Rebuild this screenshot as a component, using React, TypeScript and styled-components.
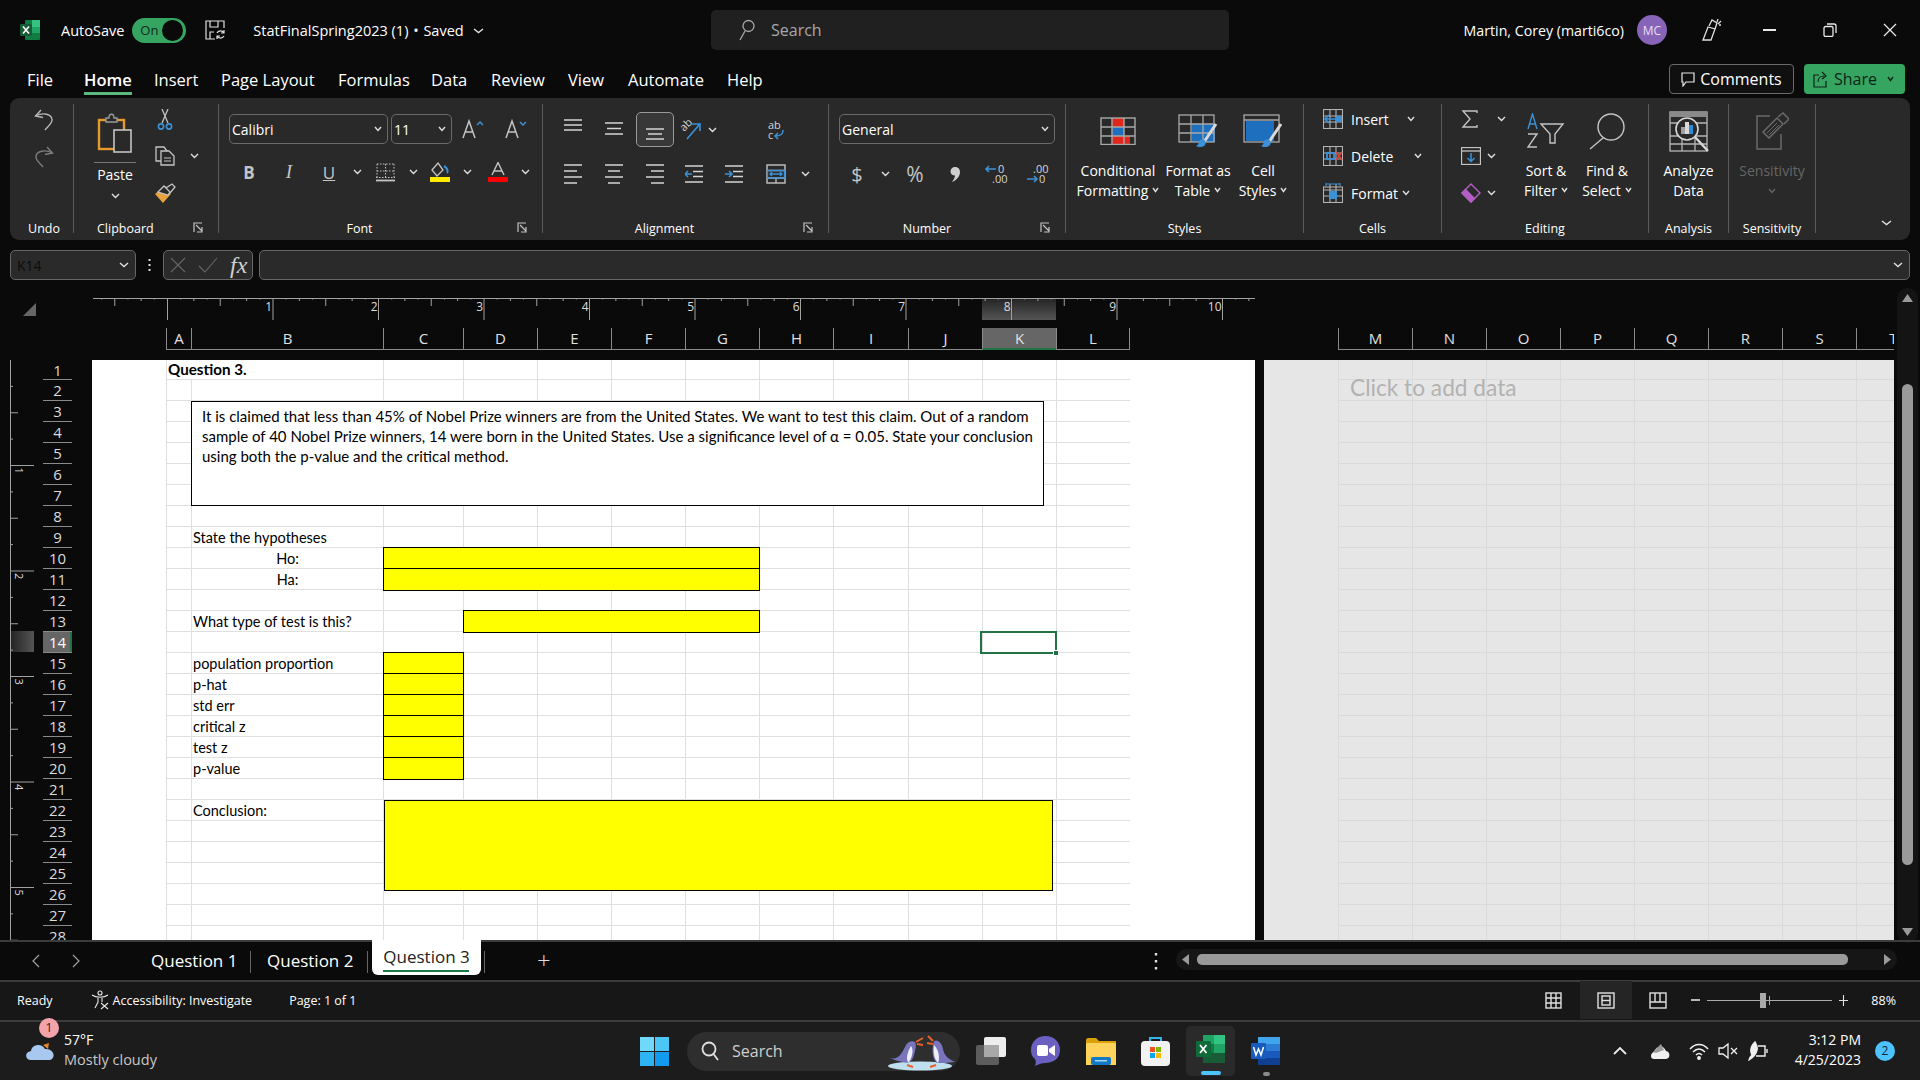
import React from "react";
import styled, { createGlobalStyle } from "styled-components";

const SEGOE = "'Open Sans', 'Noto Sans', sans-serif";
const CALIBRI = "Lato, 'Liberation Sans', sans-serif";
const G = "#c4c4c4";
const BLUE = "#3b92d8";

const GlobalStyle = createGlobalStyle`
  html, body { margin: 0; padding: 0; background: #0a0a0a; }
  * { box-sizing: border-box; }
`;

const Page = styled.div`
  width: 1920px;
  height: 1080px;
  overflow: hidden;
  display: flex;
  flex-direction: column;
  background: #0a0a0a;
  color: #fff;
  font-family: ${SEGOE};
`;

/* ---------- small drawing helpers ---------- */

const Svg = styled.svg`
  display: block;
  flex: none;
`;

const Ico = ({ w, h, children, sw = 1.3, color = G }: any) => (
  <Svg width={w} height={h} viewBox={`0 0 ${w} ${h}`} fill="none" stroke={color} strokeWidth={sw}>
    {children}
  </Svg>
);

const Chev = ({ color = "#e0e0e0", w = 9 }: any) => (
  <Ico w={w} h={6} sw={1.4} color={color}>
    <path d={`M1 1 L${w / 2} 4.5 L${w - 1} 1`} />
  </Ico>
);

const Launcher = () => (
  <Ico w={10} h={11} sw={1.2}>
    <path d="M9 1 H1 V10" />
    <path d="M3 3 L9 9 M9 5 V10 H4" />
  </Ico>
);

const UndoIcon = () => (
  <Ico w={20} h={22} sw={1.4} color="#b5b5b5">
    <path d="M7 1 L1.5 7 L9 8.5" />
    <path d="M1.5 7 C9 3 18 5 18 11 C18 15 13 18 11 21" />
  </Ico>
);
const RedoIcon = () => (
  <Ico w={20} h={22} sw={1.4} color="#7c7c7c">
    <path d="M13 1 L18.5 7 L11 8.5" />
    <path d="M18.5 7 C11 3 2 5 2 11 C2 15 7 18 9 21" />
  </Ico>
);
const PasteIcon = () => (
  <Ico w={36} h={40} sw={2}>
    <rect x="2" y="7" width="25" height="29" stroke="#e59a2c" strokeWidth="2.4" />
    <path d="M9 8 V5 H12 C12 0 17 0 17 5 H20 V9 H9 Z" stroke="#9a9a9a" fill="#292929" strokeWidth="1.4" />
    <rect x="17" y="17" width="17" height="22" fill="#292929" stroke={G} strokeWidth="1.6" />
  </Ico>
);
const CutIcon = () => (
  <Ico w={16} h={21}>
    <path d="M5 0 L11 14 M11 0 L5 14" />
    <circle cx="4" cy="17.5" r="2.6" stroke={BLUE} strokeWidth="1.6" />
    <circle cx="12" cy="17.5" r="2.6" stroke={BLUE} strokeWidth="1.6" />
  </Ico>
);
const CopyIcon = () => (
  <Ico w={20} h={20}>
    <path d="M6 15 H1 V1 H9 L12 5" />
    <path d="M6 5 H14 L19 10 V19 H6 Z" />
    <path d="M9 12 H16 M9 15 H16" strokeWidth="1" />
  </Ico>
);
const BrushIcon = () => (
  <Ico w={21} h={20}>
    <path d="M1 11 L10 4 L15 11 L8 19 Z" fill="#e8a33d" stroke="#e8a33d" />
    <path d="M3 9 L9 3 L15 9 L13 12 Z" fill="#292929" />
    <path d="M11 5 L17 1 L20 4 L15 10" stroke="#c4c4c4" />
  </Ico>
);
const GrowFont = ({ down }: any) => (
  <Ico w={22} h={20} sw={1.5}>
    <path d="M1 19 L7 2 L13 19 M3.5 13 H10.5" />
    <path d={down ? "M15 3 L18 6 L21 3" : "M15 6 L18 3 L21 6"} stroke={BLUE} />
  </Ico>
);
const BorderIcon = () => (
  <Ico w={19} h={19} sw={1}>
    <path d="M1 1 H18 M1 1 V15 M18 1 V15 M9.5 1 V15 M1 8 H18" strokeDasharray="1.5 1.5" />
    <path d="M0 17.5 H19" strokeWidth="1.8" />
    <path d="M0 14.5 H19" strokeDasharray="1.5 1.5" />
  </Ico>
);
const FillIcon = () => (
  <Ico w={20} h={21}>
    <path d="M2 8 L8 1 L13 8 L7 14 Z" />
    <path d="M14 4 C18 6 18 10 17 11" stroke={BLUE} strokeWidth="2" />
    <rect x="0" y="15" width="20" height="5" fill="#ffeb00" stroke="none" />
  </Ico>
);
const FontColorIcon = () => (
  <Ico w={20} h={21} sw={1.4}>
    <path d="M4 13 L10 0.5 L16 13 M6 9 H14" />
    <rect x="0" y="15" width="20" height="5" fill="#f00" stroke="none" />
  </Ico>
);
const Lines = ({ rows }: any) => (
  <Ico w={20} h={24} sw={1.5} color="#d4d4d4">
    {rows.map((r: number[], i: number) => (
      <path key={i} d={`M${r[0]} ${r[2]} H${r[1]}`} />
    ))}
  </Ico>
);
const OrientIcon = () => (
  <Svg width={28} height={28} viewBox="-4 -4 28 28" fill="none">
    <text transform="translate(3 12) rotate(-45)" fontSize="11" fill="#d4d4d4" fontFamily={SEGOE}>
      ab
    </text>
    <path d="M6 19 L18 5 M11 4 H19 V11" stroke={BLUE} strokeWidth="1.6" />
  </Svg>
);
const WrapIcon = () => (
  <Svg width={20} height={30} viewBox="0 -4 20 30" fill="none">
    <text x="2" y="10" fontSize="11" fill="#d4d4d4" fontFamily={SEGOE}>
      ab
    </text>
    <text x="2" y="20" fontSize="11" fill="#d4d4d4" fontFamily={SEGOE}>
      c
    </text>
    <path d="M17 11 C17 16 14 17 9 17 M12 14 L9 17 L12 20" stroke={BLUE} strokeWidth="1.6" />
  </Svg>
);
const IndentIcon = ({ rev }: any) => (
  <Ico w={19} h={20} sw={1.5} color="#d4d4d4">
    <path d="M0 2 H18 M8 7.5 H18 M8 12.5 H18 M0 18 H18" />
    <path d={rev ? "M7 10 H0 M3 7 L0 10 L3 13" : "M0 10 H7 M4 7 L7 10 L4 13"} stroke={BLUE} />
  </Ico>
);
const MergeIcon = () => (
  <Ico w={20} h={20}>
    <rect x="1" y="1" width="18" height="18" stroke={G} strokeWidth="1.4" />
    <path d="M1 6.5 H19 M1 14 H19 M10 14 V19" stroke={G} />
    <rect x="1.5" y="6.5" width="17" height="7.5" stroke={BLUE} strokeWidth="1.4" />
    <path d="M4 10 H16 M6 8 L4 10 L6 12 M14 8 L16 10 L14 12" stroke={BLUE} />
  </Ico>
);
const CommaIcon = () => (
  <Svg width={12} height={20} viewBox="0 0 12 20">
    <path d="M6 3 C9.5 3 11 5.5 11 8 C11 12 8 16 3 18 C5 15 6 13 6 11.5 C3.5 11.5 1.5 10 1.5 7.5 C1.5 5 3.5 3 6 3 Z" fill="#cfcfcf" />
  </Svg>
);
const DecIcon = ({ more }: any) => (
  <Svg width={30} height={30} viewBox="-2 -4 30 30" fill="none">
    <path d={more ? "M3 16 H13 M10 13 L13 16 L10 19" : "M3 6 H13 M6 3 L3 6 L6 9"} stroke={BLUE} strokeWidth="1.6" />
    <text x={more ? 9 : 15} y="10" fontSize="11" fill="#d4d4d4" fontFamily={SEGOE}>
      {more ? ".00" : "0"}
    </text>
    <text x={more ? 15 : 9} y="20" fontSize="11" fill="#d4d4d4" fontFamily={SEGOE}>
      {more ? "0" : ".00"}
    </text>
  </Svg>
);
const CondIcon = () => (
  <Ico w={36} h={28} sw={1.4} color="#a9a9a9">
    <rect x="12" y="1" width="12" height="9" fill="#e1261c" stroke="none" />
    <rect x="12" y="10" width="12" height="9" fill="#1e6fbd" stroke="none" />
    <rect x="12" y="19" width="18" height="9" fill="#e1261c" stroke="none" />
    <rect x="1" y="1" width="34" height="26.5" />
    <path d="M1 10 H35 M1 19 H35 M12 1 V28 M24 1 V28" />
  </Ico>
);
const TableStyleIcon = ({ solid }: any) => (
  <Ico w={40} h={34} sw={1.3} color="#a9a9a9">
    {solid ? <rect x="3" y="7" width="28" height="20" fill="#1e6fbd" stroke="none" /> : <rect x="14" y="10" width="23" height="18" fill="#1e6fbd" stroke="none" />}
    <rect x="1" y="1" width="35" height="27" />
    {solid ? <path d="M1 6 H36" /> : <path d="M1 10 H36 M1 19 H36 M13 1 V28 M25 1 V28" />}
    <path d="M38 10 L26 28" stroke="#d8d8d8" strokeWidth="3" />
    <path d="M22 26 C27 24 29 28 27 31 C25 34 19 33 18 32 C21 31 20 28 22 26 Z" fill="#3b92d8" stroke="none" />
  </Ico>
);
const CellIcon = ({ kind }: any) => (
  <Ico w={20} h={20} sw={1.1} color="#b3b3b3">
    <rect x="0.5" y={kind === "format" ? 4 : 0.5} width="19" height={kind === "format" ? 15.5 : 19} />
    <path d="M0.5 7 H19.5 M0.5 13 H19.5 M7 1 V20 M13 1 V20" />
    {kind === "insert" && <path d="M2 10 H14 M6 6 L2 10 L6 14" stroke={BLUE} strokeWidth="1.7" />}
    {kind === "insert" && <rect x="13" y="7" width="6" height="6" fill={BLUE} stroke="none" />}
    {kind === "delete" && <rect x="4" y="7" width="7" height="6" stroke={BLUE} strokeWidth="1.8" />}
    {kind === "delete" && <path d="M13 6 L19 14 M19 6 L13 14" stroke="#e0433a" strokeWidth="1.6" />}
    {kind === "format" && <rect x="6" y="8" width="8" height="8" fill={BLUE} stroke="none" />}
    {kind === "format" && <path d="M3 1 H17 M3 0 V3 M17 0 V3" stroke={BLUE} />}
  </Ico>
);
const SigmaIcon = () => (
  <Ico w={18} h={18} sw={1.4}>
    <path d="M16 3 V1 H2 L9 9 L2 17 H16 V15" />
  </Ico>
);
const FillDownIcon = () => (
  <Ico w={20} h={18}>
    <rect x="0.5" y="0.5" width="19" height="17" />
    <path d="M0.5 4 H19.5" />
    <path d="M10 6 V14 M6.5 11 L10 14.5 L13.5 11" stroke={BLUE} strokeWidth="1.5" />
  </Ico>
);
const EraserIcon = () => (
  <Ico w={20} h={20} sw={1.4} color="#b35fc5">
    <path d="M10 1 L19 10 L10 19 L1 10 Z" />
    <path d="M4.5 6.5 L13.5 15.5 L10 19 L1 10 Z" fill="#b35fc5" />
  </Ico>
);
const SortIcon = () => (
  <Svg width={38} height={36} viewBox="0 0 38 36" fill="none" stroke={G} strokeWidth="1.4">
    <path d="M1 16 L5.5 1 L10 16 M3 11 H8" stroke={BLUE} />
    <path d="M1 21 H10 L1 34 H10" />
    <path d="M14 11 H36 L28 21 V30 H23 V21 Z" />
  </Svg>
);
const FindIcon = () => (
  <Ico w={38} h={38} sw={1.4}>
    <circle cx="23" cy="15" r="13" />
    <path d="M15 26 L2 37" />
  </Ico>
);
const AnalyzeIcon = () => (
  <Ico w={40} h={41} sw={1.3} color="#b5b5b5">
    <rect x="1" y="1" width="37" height="39" />
    <rect x="1" y="1" width="37" height="5" fill="#8a8a8a" stroke="none" />
    <path d="M1 12 H38 M1 25 H38 M1 33 H38 M13 25 V40 M26 25 V40" />
    <circle cx="18" cy="18" r="11" stroke="#d8d8d8" fill="#292929" strokeWidth="1.6" />
    <path d="M26 26 L39 40" stroke="#d8d8d8" strokeWidth="2.4" />
    <rect x="12" y="16" width="4" height="7" fill="#a0a0a0" stroke="none" />
    <rect x="16" y="11" width="4" height="12" fill="#d8d8d8" stroke="none" />
    <rect x="20" y="14" width="4" height="9" fill="#2e8bd6" stroke="none" />
  </Ico>
);
const SensitivityIcon = () => (
  <Ico w={34} h={38} sw={1.5} color="#6a6a6a">
    <path d="M15 4 H2 V37 H26 V22" />
    <path d="M8 20 L22 6 L28 12 L14 26 Z" />
    <path d="M12 21 L22 11 M14 23 L24 13" strokeWidth="1" />
    <path d="M23 5 L28 1 L34 7 L29 12" />
  </Ico>
);

/* ---------- title bar ---------- */

const TitleBar = styled.div`
  height: 60px;
  display: flex;
  align-items: center;
  position: relative;
`;
const Logo = styled.div`
  margin-left: 20px;
  width: 41px;
`;
const TitleText = styled.span<{ $ml?: number; $size?: number }>`
  font-size: ${(p) => p.$size || 14.5}px;
  margin-left: ${(p) => p.$ml || 0}px;
  white-space: nowrap;
  margin-top: 1px;
`;
const TitleDot = styled.span`
  margin: 0 1px;
`;
const Toggle = styled.div`
  width: 54px;
  height: 25px;
  border-radius: 13px;
  background: #36a562;
  margin-left: 8px;
  display: flex;
  align-items: center;
  justify-content: space-between;
  padding: 0 3px 0 8px;
  color: #0b2c18;
  font-size: 13px;
`;
const Knob = styled.div`
  width: 21px;
  height: 21px;
  border-radius: 50%;
  background: #0a0a0a;
`;
const SaveBtn = styled.div`
  margin-left: 19px;
`;
const SavedChev = styled.div`
  margin-left: 9px;
  margin-top: 2px;
`;
const SearchBox = styled.div`
  position: absolute;
  left: 711px;
  top: 10px;
  width: 518px;
  height: 40px;
  background: #202020;
  border-radius: 5px;
  display: flex;
  align-items: center;
  padding-left: 27px;
  gap: 16px;
  color: #a8a8a8;
  font-size: 16px;
`;
const TitleRight = styled.div`
  margin-left: auto;
  display: flex;
  align-items: center;
`;
const Avatar = styled.div`
  width: 30px;
  height: 30px;
  border-radius: 50%;
  background: #8764b8;
  color: #e8def5;
  font-size: 12px;
  display: flex;
  align-items: center;
  justify-content: center;
  margin-left: 13px;
`;
const WinBtn = styled.div<{ $ml: number }>`
  margin-left: ${(p) => p.$ml}px;
`;

/* ---------- tabs ---------- */

const TabRow = styled.div`
  height: 38px;
  display: flex;
  align-items: flex-start;
  position: relative;
  padding-left: 27px;
`;
const MenuTab = styled.div<{ $active?: boolean; $w: number }>`
  width: ${(p) => p.$w}px;
  height: 38px;
  margin-top: -3px;
  font-size: 16.5px;
  line-height: 46px;
  white-space: nowrap;
  font-weight: ${(p) => (p.$active ? 600 : 400)};
  box-shadow: ${(p) => (p.$active ? "inset 0 -3px 0 #5cb87f" : "none")};
`;
const TabGap = styled.div<{ $w: number }>`
  width: ${(p) => p.$w}px;
  flex: none;
`;
const TabActions = styled.div`
  margin-left: auto;
  margin-right: 15px;
  display: flex;
  gap: 10px;
  margin-top: 4px;
`;
const CommentsBtn = styled.div`
  width: 125px;
  height: 30px;
  border: 1px solid #6a6a6a;
  border-radius: 4px;
  display: flex;
  align-items: center;
  justify-content: center;
  gap: 5px;
  font-size: 16px;
  background: #101010;
`;
const ShareBtn = styled.div`
  width: 101px;
  height: 30px;
  border-radius: 4px;
  background: #36a562;
  color: #0c2416;
  display: flex;
  align-items: center;
  padding-left: 9px;
  gap: 6px;
  font-size: 16px;
`;

/* ---------- ribbon ---------- */

const Ribbon = styled.div`
  margin: 0 10px;
  height: 142px;
  background: #292929;
  border-radius: 9px;
  padding-top: 6px;
  display: flex;
  position: relative;
`;
const Group = styled.div<{ $w: number }>`
  width: ${(p) => p.$w}px;
  height: 129px;
  border-right: 1px solid #5a5a5a;
  display: flex;
  flex-direction: column;
  position: relative;
  flex: none;
`;
const Body = styled.div<{ $pl?: number }>`
  flex: 1;
  display: flex;
  padding-left: ${(p) => p.$pl || 0}px;
`;
const Stack = styled.div`
  display: flex;
  flex-direction: column;
`;
const GroupLabel = styled.div<{ $pr?: number; $pl?: number; $left?: boolean }>`
  height: 10px;
  line-height: 12px;
  font-size: 12.5px;
  white-space: nowrap;
  text-align: ${(p) => (p.$left ? "left" : "center")};
  padding-right: ${(p) => p.$pr || 0}px;
  padding-left: ${(p) => p.$pl || 0}px;
`;
const LauncherSpot = styled.div`
  position: absolute;
  right: 15px;
  bottom: 0;
`;
const Select = styled.div<{ $w: number; $ml?: number }>`
  width: ${(p) => p.$w}px;
  margin-left: ${(p) => p.$ml || 0}px;
  height: 30px;
  border: 1px solid #6a6a6a;
  border-radius: 5px;
  display: flex;
  align-items: center;
  justify-content: space-between;
  padding: 0 5px 0 2px;
  font-size: 14px;
  background: #292929;
  flex: none;
`;
const ToolRow = styled.div<{ $mt?: number; $h?: number }>`
  display: flex;
  align-items: center;
  height: ${(p) => p.$h || 28}px;
  margin-top: ${(p) => p.$mt || 0}px;
`;
const Slot = styled.div<{ $w: number; $ml?: number; $size?: number; $color?: string }>`
  width: ${(p) => p.$w}px;
  margin-left: ${(p) => p.$ml || 0}px;
  display: flex;
  justify-content: center;
  align-items: center;
  flex: none;
  font-size: ${(p) => p.$size || 14}px;
  color: ${(p) => p.$color || G};
`;
const SerifItalic = styled.i`
  font-family: "Liberation Serif", serif;
  font-size: 19px;
`;
const ActiveAlign = styled.div`
  width: 38px;
  height: 35px;
  margin-left: 2px;
  border: 1px solid #9a9a9a;
  border-radius: 5px;
  background: #383838;
  display: flex;
  align-items: center;
  justify-content: center;
  flex: none;
`;
const BigTool = styled.div<{ $w: number; $dim?: boolean }>`
  width: ${(p) => p.$w}px;
  display: flex;
  flex-direction: column;
  align-items: center;
  flex: none;
  color: ${(p) => (p.$dim ? "#666" : "#fff")};
`;
const BigZone = styled.div`
  height: 54px;
  display: flex;
  align-items: center;
  justify-content: center;
`;
const BigText = styled.div`
  margin-top: 3px;
  font-size: 14px;
  line-height: 20px;
  text-align: center;
  white-space: nowrap;
`;
const ChevInline = styled.span`
  display: inline-block;
  margin-left: 4px;
  vertical-align: 3px;
`;
const DimChev = styled.div`
  height: 20px;
  display: flex;
  align-items: center;
  justify-content: center;
`;
const SmallRows = styled.div<{ $pl?: number; $w?: number }>`
  display: flex;
  flex-direction: column;
  gap: 5px;
  margin-top: -1px;
  padding-left: ${(p) => p.$pl || 0}px;
  width: ${(p) => (p.$w ? `${p.$w}px` : "auto")};
  flex: none;
`;
const SmallRow = styled.div`
  height: 32px;
  display: flex;
  align-items: center;
  font-size: 14px;
  white-space: nowrap;
`;
const RowLabel = styled.div<{ $w: number }>`
  width: ${(p) => p.$w}px;
  margin-left: 8px;
`;
const UndoCol = styled.div`
  padding: 5px 0 0 24px;
  display: flex;
  flex-direction: column;
  gap: 15px;
`;
const PasteCol = styled.div`
  width: 44px;
  margin-left: 19px;
  display: flex;
  flex-direction: column;
  align-items: center;
  padding-top: 9px;
  font-size: 14px;
`;
const PasteRule = styled.div`
  width: 42px;
  height: 1px;
  background: #777;
  margin: 9px 0 2px;
`;
const PasteChev = styled.div`
  margin-top: 9px;
`;
const CollapseBtn = styled.div`
  position: absolute;
  right: 18px;
  bottom: 14px;
`;

/* ---------- formula bar ---------- */

const FormulaRow = styled.div`
  margin: 10px 10px 0;
  height: 30px;
  display: flex;
  align-items: stretch;
`;
const NameBox = styled.div`
  width: 126px;
  border: 1px solid #666;
  border-radius: 5px;
  background: #2a2a2a;
  color: #0c0c0c;
  font-size: 14px;
  display: flex;
  align-items: center;
  justify-content: space-between;
  padding: 0 6px;
`;
const DotsBox = styled.div`
  width: 27px;
  display: flex;
  align-items: center;
  justify-content: center;
`;
const FxBox = styled.div`
  width: 90px;
  border: 1px solid #666;
  border-radius: 5px;
  background: #2a2a2a;
  display: flex;
  align-items: center;
  padding-left: 6px;
  gap: 12px;
`;
const FxText = styled.span`
  font-family: "Liberation Serif", serif;
  font-style: italic;
  font-size: 24px;
  line-height: 24px;
  color: #d0d0d0;
`;
const FormulaInput = styled.div`
  margin-left: 6px;
  flex: 1;
  border: 1px solid #666;
  border-radius: 5px;
  background: #2a2a2a;
  display: flex;
  align-items: center;
  justify-content: flex-end;
  padding-right: 6px;
`;

/* ---------- workspace ---------- */

const Workspace = styled.div`
  height: 660px;
  display: flex;
`;
const Gutter = styled.div`
  width: 92px;
  flex: none;
  display: flex;
  flex-direction: column;
`;
const GutterTop = styled.div`
  height: 80px;
  padding: 23px 0 0 23px;
`;
const GutterBody = styled.div`
  height: 580px;
  display: flex;
  padding-left: 10px;
  overflow: hidden;
`;
const RowHeads = styled.div`
  margin-left: 9px;
  width: 29px;
  font-size: 15px;
`;
const RowHead = styled.div<{ $sel: boolean; $first: boolean }>`
  height: ${(p) => (p.$first ? 20 : 21)}px;
  line-height: 21px;
  text-align: center;
  color: ${(p) => (p.$sel ? "#fff" : "#dcdcdc")};
  background: ${(p) => (p.$sel ? "#666" : "transparent")};
  border-bottom: 1px solid #8a8a8a;
  box-shadow: ${(p) => (p.$sel ? "inset -2px 0 0 #217346" : "none")};
`;
const Center = styled.div`
  display: flex;
  flex-direction: column;
  width: 1802px;
  flex: none;
`;
const TopArea = styled.div`
  height: 80px;
  padding-top: 18px;
`;
const ColHeads = styled.div`
  margin-top: 8px;
  height: 22px;
  display: flex;
  font-size: 15px;
  overflow: hidden;
`;
const ColHead = styled.div<{ $w: number; $sel?: boolean; $last?: boolean }>`
  width: ${(p) => p.$w}px;
  flex: none;
  text-align: center;
  line-height: 20px;
  color: #e0e0e0;
  border-left: 1px solid #8a8a8a;
  border-right: ${(p) => (p.$last ? "1px solid #8a8a8a" : "0")};
  border-bottom: ${(p) => (p.$sel ? "2px solid #217346" : "1px solid #8a8a8a")};
  background: ${(p) => (p.$sel ? "#666" : "transparent")};
`;
const ColSpacer = styled.div<{ $w: number }>`
  width: ${(p) => p.$w}px;
  flex: none;
`;
const Pages = styled.div`
  height: 580px;
  display: flex;
  gap: 9px;
`;
const PageOne = styled.div`
  width: 1163px;
  background: #fff;
  padding-left: 74px;
  overflow: hidden;
  flex: none;
`;
const PageTwo = styled.div`
  width: 630px;
  background: #e6e6e6;
  padding-left: 74px;
  overflow: hidden;
  position: relative;
  flex: none;
`;
const Sheet = styled.div<{ $cols: string }>`
  display: grid;
  grid-template-columns: ${(p) => p.$cols};
  grid-template-rows: 20px repeat(27, 21px);
  height: 580px;
  color: #000;
  font-family: ${CALIBRI};
  font-size: 14.5px;
`;
const Cell = styled.div<{ $line: string; $c: number; $r: number }>`
  grid-column: ${(p) => p.$c};
  grid-row: ${(p) => p.$r};
  border-left: 1px solid ${(p) => p.$line};
  border-bottom: 1px solid ${(p) => p.$line};
`;
const Label = styled.div<{ $c: number; $r: number; $span?: number; $bold?: boolean; $center?: boolean }>`
  grid-column: ${(p) => p.$c} / span ${(p) => p.$span || 1};
  grid-row: ${(p) => p.$r};
  margin: 0 0 1px 1px;
  padding-left: ${(p) => (p.$center ? 0 : 1)}px;
  background: ${(p) => (p.$bold ? "#fff" : "transparent")};
  font-weight: ${(p) => (p.$bold ? 700 : 400)};
  font-size: ${(p) => (p.$bold ? 15.2 : 14.5)}px;
  text-align: ${(p) => (p.$center ? "center" : "left")};
  line-height: ${(p) => (p.$bold ? 19 : 22)}px;
  white-space: nowrap;
`;
const Answer = styled.div<{ $c: number; $r: number; $span?: number }>`
  grid-column: ${(p) => p.$c} / span ${(p) => p.$span || 1};
  grid-row: ${(p) => p.$r};
  background: #ffff00;
  border: 1px solid #000;
  margin: -1px -1px -1px 0;
`;
const QuestionBox = styled.div`
  grid-column: 2 / span 10;
  grid-row: 3 / span 5;
  margin: 0 12px 0 0;
  background: #fff;
  border: 1px solid #000;
  padding: 4px 0 0 10px;
  font-size: 15px;
  line-height: 20px;
  white-space: nowrap;
`;
const ConclusionBox = styled.div`
  grid-column: 3 / span 9;
  grid-row: 22 / span 5;
  margin: 0 3px 14px 1px;
  background: #ffff00;
  border: 1px solid #000;
`;
const Selection = styled.div`
  grid-column: 11;
  grid-row: 14;
  margin: -1px -1px -1px -2px;
  border: 2px solid #217346;
  position: relative;
`;
const Handle = styled.div`
  position: absolute;
  right: -4px;
  bottom: -4px;
  width: 6px;
  height: 6px;
  background: #217346;
  border: 1px solid #fff;
`;
const ClickHint = styled.div`
  position: absolute;
  left: 86px;
  top: 12px;
  font-family: ${CALIBRI};
  font-size: 22.7px;
  line-height: 32px;
  color: #b2b2b2;
`;
const VScroll = styled.div`
  width: 21px;
  margin: 8px 2px 0 3px;
  height: 655px;
  background: #141414;
  border-radius: 10px;
  display: flex;
  flex-direction: column;
  align-items: center;
  padding-top: 6px;
`;
const VThumb = styled.div`
  width: 11px;
  height: 481px;
  margin-top: 82px;
  background: #9a9a9a;
  border-radius: 6px;
`;
const VDown = styled.div`
  margin-top: 63px;
`;

/* ---------- sheet tabs ---------- */

const SheetBar = styled.div`
  height: 40px;
  border-top: 2px solid #3c3c3c;
  display: flex;
  position: relative;
`;
const NavBtn = styled.div<{ $ml: number }>`
  margin-left: ${(p) => p.$ml}px;
  padding-top: 12px;
`;
const SheetTab = styled.div<{ $w: number; $ml?: number; $pl?: number }>`
  width: ${(p) => p.$w}px;
  margin-left: ${(p) => p.$ml || 0}px;
  padding-left: ${(p) => p.$pl || 0}px;
  font-size: 17px;
  line-height: 38px;
  white-space: nowrap;
`;
const TabDivider = styled.div<{ $ml?: number }>`
  width: 1px;
  height: 22px;
  background: #666;
  margin: 9px 0 0 ${(p) => p.$ml || 0}px;
  flex: none;
`;
const ActiveSheetTab = styled.div`
  width: 109px;
  height: 35px;
  margin: -2px 0 0 4px;
  background: #fff;
  color: #222;
  border-radius: 0 0 6px 6px;
  font-size: 17px;
  line-height: 33px;
  text-align: center;
  position: relative;
`;
const ActiveLine = styled.div`
  position: absolute;
  left: 11px;
  right: 12px;
  bottom: 3px;
  height: 2px;
  background: #1a7a43;
`;
const PlusBtn = styled.div`
  margin-left: 52px;
  font-size: 24px;
  font-weight: 300;
  line-height: 36px;
  color: #ddd;
`;
const DotsSpot = styled.div`
  margin-left: auto;
  padding-top: 10px;
  margin-right: 18px;
`;
const HScroll = styled.div`
  width: 721px;
  height: 21px;
  margin: 7px 23px 0 0;
  border-radius: 11px;
  background: #161616;
  display: flex;
  align-items: center;
  padding: 0 6px;
`;
const HThumb = styled.div`
  width: 651px;
  height: 11px;
  background: #9a9a9a;
  border-radius: 5px;
  margin: 0 36px 0 8px;
`;

/* ---------- status bar ---------- */

const StatusBar = styled.div`
  height: 40px;
  background: #171717;
  border-top: 2px solid #3c3c3c;
  padding-bottom: 2px;
  display: flex;
  align-items: center;
  font-size: 12.5px;
  white-space: nowrap;
`;
const StatusText = styled.span<{ $ml: number }>`
  margin-left: ${(p) => p.$ml}px;
`;
const ViewBtn = styled.div<{ $active?: boolean; $ml?: number }>`
  width: 52px;
  height: 38px;
  margin-left: ${(p) => p.$ml || 0}px;
  display: flex;
  align-items: center;
  justify-content: center;
  background: ${(p) => (p.$active ? "#252525" : "transparent")};
`;
const ZoomArea = styled.div`
  display: flex;
  align-items: center;
  margin-left: auto;
  margin-right: 24px;
`;
const ZoomTrack = styled.div`
  width: 125px;
  height: 1px;
  background: #aaa;
  margin: 0 7px 0 7px;
  position: relative;
`;
const ZoomThumb = styled.div`
  position: absolute;
  left: 53px;
  top: -7px;
  width: 6px;
  height: 15px;
  background: #a8a8a8;
`;
const ZoomTick = styled.div`
  position: absolute;
  left: 62px;
  top: -4px;
  width: 1px;
  height: 9px;
  background: #aaa;
`;
const ZoomPct = styled.span`
  margin-left: 23px;
`;

/* ---------- task bar ---------- */

const TaskBar = styled.div`
  height: 60px;
  background: #1c1c1c;
  border-top: 2px solid #3c3c3c;
  display: flex;
  align-items: center;
`;
const Weather = styled.div`
  width: 640px;
  flex: none;
  display: flex;
  align-items: center;
  padding-left: 25px;
  position: relative;
`;
const WeatherBadge = styled.div`
  position: absolute;
  left: 39px;
  top: -14px;
  width: 20px;
  height: 20px;
  border-radius: 50%;
  background: #f4a3ab;
  color: #222;
  font-size: 12px;
  text-align: center;
  line-height: 20px;
`;
const WeatherText = styled.div`
  margin-left: 9px;
  margin-top: -2px;
  font-size: 14px;
  line-height: 20px;
`;
const Muted = styled.div`
  color: #c8c8c8;
  font-size: 14.5px;
`;
const TaskSearch = styled.div`
  margin-left: 18px;
  width: 273px;
  height: 39px;
  border-radius: 20px;
  background: #2e2e2e;
  display: flex;
  align-items: center;
  padding-left: 14px;
  gap: 13px;
  color: #cfcfcf;
  font-size: 16px;
  position: relative;
  overflow: hidden;
`;
const Penguins = styled.div`
  position: absolute;
  right: 4px;
  top: 0;
`;
const TaskItem = styled.div<{ $ml: number; $active?: boolean }>`
  margin-left: ${(p) => p.$ml}px;
  position: relative;
  flex: none;
  ${(p) =>
    p.$active &&
    `width: 49px; height: 50px; background: #2a2a2a; border-radius: 5px; display: flex; align-items: center; justify-content: center; padding-bottom: 4px;`}
`;
const RunLine = styled.div`
  position: absolute;
  left: 15px;
  bottom: 1px;
  width: 20px;
  height: 4px;
  border-radius: 2px;
  background: #4cc2ff;
`;
const RunDot = styled.div`
  position: absolute;
  left: 12px;
  bottom: -11px;
  width: 7px;
  height: 4px;
  border-radius: 2px;
  background: #8a8a8a;
`;
const Tray = styled.div`
  margin-left: auto;
  display: flex;
  align-items: center;
  gap: 9px;
  padding-right: 25px;
`;
const Clock = styled.div`
  margin-left: 18px;
  margin-top: -2px;
  text-align: right;
  font-size: 14px;
  line-height: 20px;
`;
const NotifyBadge = styled.div`
  margin-left: 5px;
  width: 20px;
  height: 20px;
  border-radius: 50%;
  background: #4cc2ff;
  color: #102a3a;
  font-size: 12px;
  text-align: center;
  line-height: 20px;
`;

/* ---------- data ---------- */

const COLS = [25, 192, 80, 74, 74, 74, 74, 74, 75, 74, 74, 74];
const LETTERS = "ABCDEFGHIJKL".split("");
const RIGHT_LETTERS = "MNOPQRST".split("");
const RIGHT_W = [74, 74, 74, 74, 74, 74, 74, 74];
const ROWS = Array.from({ length: 28 }, (_, i) => i + 1);

const MENU = [
  ["File", 57],
  ["Home", 70, 1],
  ["Insert", 67],
  ["Page Layout", 117],
  ["Formulas", 93],
  ["Data", 60],
  ["Review", 77],
  ["View", 60],
  ["Automate", 99],
  ["Help", 50],
] as any[];

const LEFT_LABELS: any[] = [
  ["State the hypotheses", 9],
  ["What type of test is this?", 13],
  ["population proportion", 15],
  ["p-hat", 16],
  ["std err", 17],
  ["critical z", 18],
  ["test z", 19],
  ["p-value", 20],
  ["Conclusion:", 22],
];

/* ---------- ruler drawings ---------- */

const STEP = 105.5 / 8;

const TopRuler = () => {
  const ticks = [];
  for (let k = -5; k <= 82; k++) {
    const x = 75.5 + k * STEP;
    const len = k % 8 === 0 ? 22 : k % 4 === 0 ? 8 : k % 2 === 0 ? 3 : 1.5;
    ticks.push(<line key={k} x1={x} x2={x} y1={0} y2={len} stroke="#a0a0a0" />);
  }
  return (
    <Svg width={1164} height={22}>
      <defs>
        <linearGradient id="rulerSel" x1="0" y1="0" x2="0" y2="1">
          <stop offset="0" stopColor="#222" />
          <stop offset="1" stopColor="#555" />
        </linearGradient>
      </defs>
      <rect x={890} y={0} width={74} height={22} fill="url(#rulerSel)" />
      <line x1={1} x2={1163} y1={0.5} y2={0.5} stroke="#a0a0a0" />
      {ticks}
      {Array.from({ length: 10 }, (_, i) => (
        <text key={i} x={75.5 + (i + 1) * 8 * STEP - 1} y={13} textAnchor="end" fontSize="12" fill="#ddd" fontFamily={SEGOE}>
          {i + 1}
        </text>
      ))}
    </Svg>
  );
};

const SideRuler = () => {
  const ticks = [];
  for (let k = 1; k <= 44; k += 1) {
    if (k % 2) continue;
    const y = k * STEP;
    const len = k % 8 === 0 ? 24 : k % 4 === 0 ? 8 : 3;
    ticks.push(<line key={k} x1={0} x2={len} y1={y} y2={y} stroke="#a0a0a0" />);
  }
  return (
    <Svg width={24} height={580}>
      <defs>
        <linearGradient id="sideSel" x1="0" y1="0" x2="1" y2="0">
          <stop offset="0" stopColor="#222" />
          <stop offset="1" stopColor="#555" />
        </linearGradient>
      </defs>
      <rect x={0} y={271} width={24} height={21} fill="url(#sideSel)" />
      <line x1={0.5} x2={0.5} y1={0} y2={580} stroke="#a0a0a0" />
      {ticks}
      {[1, 2, 3, 4, 5].map((n) => (
        <text key={n} transform={`translate(4.5 ${n * 8 * STEP + 2}) rotate(90)`} fontSize="11" fill="#ddd" fontFamily={SEGOE}>
          {n}
        </text>
      ))}
    </Svg>
  );
};

/* ---------- task bar art ---------- */

const PenguinArt = () => (
  <Svg width={70} height={39} viewBox="0 0 70 39" fill="none">
    <ellipse cx="34" cy="34" rx="32" ry="4.5" fill="#bfe0ee" />
    <path d="M4 26 C12 28 15 23 19 15 C21 10 25 8 29 10 C31 13 29 20 27 26 C25 30 21 32 17 30 C12 29 8 28 4 26 Z" fill="#7a74bd" />
    <path d="M25 14 C28 17 26 26 23 30 C20 30 20 22 25 14 Z" fill="#eeeef6" />
    <path d="M30 10 L37 6 M31 12 L37 13" stroke="#e8602c" strokeWidth="2" />
    <path d="M21 33 L27 35" stroke="#e8602c" strokeWidth="2" />
    <path d="M48 9 C52 7 56 11 57 17 C58 23 62 27 69 30 C62 31 56 31 52 31 C47 30 45 18 48 9 Z" fill="#7a74bd" />
    <path d="M48 13 C47 20 48 27 52 31 C54 26 53 18 48 13 Z" fill="#eeeef6" />
    <path d="M47 9 L42 4 M47 12 L41 11" stroke="#e8602c" strokeWidth="2" />
    <path d="M50 33 L44 35" stroke="#e8602c" strokeWidth="2" />
  </Svg>
);

const App = () => {
  const colTemplate = COLS.map((c) => `${c}px`).join(" ");
  const rightTemplate = RIGHT_W.map((c) => `${c}px`).join(" ");

  return (
    <Page>
      <GlobalStyle />
      <TitleBar>
        <Logo>
          <Svg width={20} height={20} viewBox="0 0 20 20">
            <rect x="5" y="0" width="15" height="20" rx="1" fill="#107c41" />
            <rect x="12" y="0" width="8" height="7" fill="#33c481" />
            <rect x="12" y="7" width="8" height="6" fill="#21a366" />
            <rect x="0" y="4" width="12" height="12" rx="1" fill="#185c37" />
            <path d="M3 6.5 L9 13.5 M9 6.5 L3 13.5" stroke="#fff" strokeWidth="1.6" />
          </Svg>
        </Logo>
        <TitleText>AutoSave</TitleText>
        <Toggle>
          On
          <Knob />
        </Toggle>
        <SaveBtn>
          <Ico w={20} h={20} sw={1.2} color="#e0e0e0">
            <path d="M10 19 H1 V1 H19 V8" />
            <path d="M5 1 V7 H13 V1 M5 19 V12 H9" />
            <path d="M12 13 A4 4 0 0 1 19 13 M19 10 V13 H16 M19 16 A4 4 0 0 1 12 16 M12 19 V16 H15" />
          </Ico>
        </SaveBtn>
        <TitleText $ml={28}>
          StatFinalSpring2023 (1) <TitleDot>•</TitleDot> Saved
        </TitleText>
        <SavedChev>
          <Chev w={11} />
        </SavedChev>
        <SearchBox>
          <Ico w={17} h={22} sw={1.3} color="#a8a8a8">
            <circle cx="10.5" cy="7" r="5.5" />
            <path d="M7 12 L2 21" />
          </Ico>
          Search
        </SearchBox>
        <TitleRight>
          <TitleText $size={14.2}>Martin, Corey (marti6co)</TitleText>
          <Avatar>MC</Avatar>
          <WinBtn $ml={33}>
            <Ico w={22} h={24} sw={1.3} color="#e0e0e0">
              <path d="M8 9 L15 11 L11 22 L3 22 Z" />
              <path d="M9 8 L12 2 L17 5 L15 11" />
              <path d="M18 1 L17 4 M21 3 L18 6 M21 7 H19" />
            </Ico>
          </WinBtn>
          <WinBtn $ml={41}>
            <Ico w={13} h={2} sw={2} color="#e8e8e8">
              <path d="M0 1 H13" />
            </Ico>
          </WinBtn>
          <WinBtn $ml={47}>
            <Ico w={14} h={14} sw={1.3} color="#e8e8e8">
              <rect x="1" y="3.5" width="9" height="10" rx="1.5" />
              <path d="M4 1 H11 C12.5 1 13 2 13 3 V10" />
            </Ico>
          </WinBtn>
          <WinBtn $ml={46}>
            <Ico w={14} h={14} sw={1.3} color="#e8e8e8">
              <path d="M1 1 L13 13 M13 1 L1 13" />
            </Ico>
          </WinBtn>
          <TabGap $w={23} />
        </TitleRight>
      </TitleBar>

      <TabRow>
        {MENU.map(([name, w, active]) =>
          active ? (
            <React.Fragment key={name}>
              <MenuTab $active $w={48}>
                {name}
              </MenuTab>
              <TabGap $w={22} />
            </React.Fragment>
          ) : (
            <MenuTab key={name} $w={w}>
              {name}
            </MenuTab>
          )
        )}
        <TabActions>
          <CommentsBtn>
            <Ico w={14} h={15} sw={1.2} color="#e8e8e8">
              <path d="M1 1 H13 V10 H5 L2 14 V10 H1 Z" />
            </Ico>
            Comments
          </CommentsBtn>
          <ShareBtn>
            <Ico w={15} h={17} sw={1.2} color="#0c2416">
              <path d="M6 4 H1 V16 H13 V10" />
              <path d="M5 11 C5 7 8 5 11 5 M9 1 L13 5 L9 8" />
            </Ico>
            Share
            <ChevInline>
              <Chev w={7} color="#0c2416" />
            </ChevInline>
          </ShareBtn>
        </TabActions>
      </TabRow>

      <Ribbon>
        <Group $w={64}>
          <Body>
            <UndoCol>
              <UndoIcon />
              <RedoIcon />
            </UndoCol>
          </Body>
          <GroupLabel $pl={5}>Undo</GroupLabel>
        </Group>

        <Group $w={145}>
          <Body>
            <PasteCol>
              <PasteIcon />
              <PasteRule />
              Paste
              <PasteChev>
                <Chev />
              </PasteChev>
            </PasteCol>
            <SmallRows $pl={17}>
              <SmallRow>
                <Slot $w={22}>
                  <CutIcon />
                </Slot>
              </SmallRow>
              <SmallRow>
                <Slot $w={22}>
                  <CopyIcon />
                </Slot>
                <Slot $w={8} $ml={14}>
                  <Chev />
                </Slot>
              </SmallRow>
              <SmallRow>
                <Slot $w={22}>
                  <BrushIcon />
                </Slot>
              </SmallRow>
            </SmallRows>
          </Body>
          <GroupLabel $left $pl={23}>
            Clipboard
          </GroupLabel>
          <LauncherSpot>
            <Launcher />
          </LauncherSpot>
        </Group>

        <Group $w={324}>
          <Body $pl={10}>
            <Stack>
              <ToolRow $mt={10} $h={30}>
                <Select $w={159}>
                  Calibri
                  <Chev w={8} />
                </Select>
                <Select $w={61} $ml={3}>
                  11
                  <Chev w={8} />
                </Select>
                <Slot $w={22} $ml={10}>
                  <GrowFont />
                </Slot>
                <Slot $w={22} $ml={21}>
                  <GrowFont down />
                </Slot>
              </ToolRow>
              <ToolRow $mt={14}>
                <Slot $w={40} $size={17}>
                  <b>B</b>
                </Slot>
                <Slot $w={40}>
                  <SerifItalic>I</SerifItalic>
                </Slot>
                <Slot $w={40} $size={17}>
                  <u>U</u>
                </Slot>
                <Slot $w={16}>
                  <Chev />
                </Slot>
                <Slot $w={40}>
                  <BorderIcon />
                </Slot>
                <Slot $w={16}>
                  <Chev />
                </Slot>
                <Slot $w={38}>
                  <FillIcon />
                </Slot>
                <Slot $w={16}>
                  <Chev />
                </Slot>
                <Slot $w={46}>
                  <FontColorIcon />
                </Slot>
                <Slot $w={8}>
                  <Chev />
                </Slot>
              </ToolRow>
            </Stack>
          </Body>
          <GroupLabel $pr={42}>Font</GroupLabel>
          <LauncherSpot>
            <Launcher />
          </LauncherSpot>
        </Group>

        <Group $w={286}>
          <Body $pl={9}>
            <Stack>
              <ToolRow $mt={8} $h={35}>
                <Slot $w={41}>
                  <Lines rows={[[1, 19, 2], [1, 19, 7], [1, 19, 12]]} />
                </Slot>
                <Slot $w={41}>
                  <Lines rows={[[1, 19, 5], [3, 17, 10.5], [1, 19, 16]]} />
                </Slot>
                <ActiveAlign>
                  <Lines rows={[[1, 19, 11], [3, 17, 16], [1, 19, 21]]} />
                </ActiveAlign>
                <Slot $w={34}>
                  <OrientIcon />
                </Slot>
                <Slot $w={8}>
                  <Chev />
                </Slot>
                <Slot $w={20} $ml={50}>
                  <WrapIcon />
                </Slot>
              </ToolRow>
              <ToolRow $mt={13}>
                <Slot $w={41}>
                  <Lines rows={[[1, 19, 3], [1, 14, 9], [1, 19, 15], [1, 14, 21]]} />
                </Slot>
                <Slot $w={41}>
                  <Lines rows={[[1, 19, 3], [4, 16, 9], [1, 19, 15], [4, 16, 21]]} />
                </Slot>
                <Slot $w={41}>
                  <Lines rows={[[1, 19, 3], [6, 19, 9], [1, 19, 15], [6, 19, 21]]} />
                </Slot>
                <Slot $w={39}>
                  <IndentIcon rev />
                </Slot>
                <Slot $w={41}>
                  <IndentIcon />
                </Slot>
                <Slot $w={41}>
                  <MergeIcon />
                </Slot>
                <Slot $w={8} $ml={5}>
                  <Chev />
                </Slot>
              </ToolRow>
            </Stack>
          </Body>
          <GroupLabel $pr={42}>Alignment</GroupLabel>
          <LauncherSpot>
            <Launcher />
          </LauncherSpot>
        </Group>

        <Group $w={237}>
          <Body $pl={10}>
            <Stack>
              <ToolRow $mt={10} $h={30}>
                <Select $w={216}>
                  General
                  <Chev w={8} />
                </Select>
              </ToolRow>
              <ToolRow $mt={16}>
                <Slot $w={36} $size={20}>
                  $
                </Slot>
                <Slot $w={20}>
                  <Chev />
                </Slot>
                <Slot $w={40} $size={21}>
                  %
                </Slot>
                <Slot $w={40}>
                  <CommaIcon />
                </Slot>
                <Slot $w={41}>
                  <DecIcon />
                </Slot>
                <Slot $w={41}>
                  <DecIcon more />
                </Slot>
              </ToolRow>
            </Stack>
          </Body>
          <GroupLabel $pr={40}>Number</GroupLabel>
          <LauncherSpot>
            <Launcher />
          </LauncherSpot>
        </Group>

        <Group $w={238}>
          <Body $pl={6}>
            <BigTool $w={92}>
              <BigZone>
                <CondIcon />
              </BigZone>
              <BigText>
                Conditional
                <br />
                Formatting
                <ChevInline>
                  <Chev w={7} />
                </ChevInline>
              </BigText>
            </BigTool>
            <BigTool $w={68}>
              <BigZone>
                <TableStyleIcon />
              </BigZone>
              <BigText>
                Format as
                <br />
                Table
                <ChevInline>
                  <Chev w={7} />
                </ChevInline>
              </BigText>
            </BigTool>
            <BigTool $w={62}>
              <BigZone>
                <TableStyleIcon solid />
              </BigZone>
              <BigText>
                Cell
                <br />
                Styles
                <ChevInline>
                  <Chev w={7} />
                </ChevInline>
              </BigText>
            </BigTool>
          </Body>
          <GroupLabel>Styles</GroupLabel>
        </Group>

        <Group $w={138}>
          <Body>
            <SmallRows $pl={19}>
              <SmallRow>
                <CellIcon kind="insert" />
                <RowLabel $w={56}>Insert</RowLabel>
                <Chev w={8} />
              </SmallRow>
              <SmallRow>
                <CellIcon kind="delete" />
                <RowLabel $w={63}>Delete</RowLabel>
                <Chev w={8} />
              </SmallRow>
              <SmallRow>
                <CellIcon kind="format" />
                <RowLabel $w={51}>Format</RowLabel>
                <Chev w={8} />
              </SmallRow>
            </SmallRows>
          </Body>
          <GroupLabel>Cells</GroupLabel>
        </Group>

        <Group $w={207}>
          <Body>
            <SmallRows $pl={19} $w={81}>
              <SmallRow>
                <SigmaIcon />
                <Slot $w={8} $ml={18}>
                  <Chev />
                </Slot>
              </SmallRow>
              <SmallRow>
                <FillDownIcon />
                <Slot $w={8} $ml={6}>
                  <Chev />
                </Slot>
              </SmallRow>
              <SmallRow>
                <EraserIcon />
                <Slot $w={8} $ml={6}>
                  <Chev />
                </Slot>
              </SmallRow>
            </SmallRows>
            <BigTool $w={46}>
              <BigZone>
                <SortIcon />
              </BigZone>
              <BigText>
                Sort &amp;
                <br />
                Filter
                <ChevInline>
                  <Chev w={7} />
                </ChevInline>
              </BigText>
            </BigTool>
            <BigTool $w={76}>
              <BigZone>
                <FindIcon />
              </BigZone>
              <BigText>
                Find &amp;
                <br />
                Select
                <ChevInline>
                  <Chev w={7} />
                </ChevInline>
              </BigText>
            </BigTool>
          </Body>
          <GroupLabel>Editing</GroupLabel>
        </Group>

        <Group $w={80}>
          <Body>
            <BigTool $w={79}>
              <BigZone>
                <AnalyzeIcon />
              </BigZone>
              <BigText>
                Analyze
                <br />
                Data
              </BigText>
            </BigTool>
          </Body>
          <GroupLabel>Analysis</GroupLabel>
        </Group>

        <Group $w={87}>
          <Body>
            <BigTool $w={86} $dim>
              <BigZone>
                <SensitivityIcon />
              </BigZone>
              <BigText>
                Sensitivity
                <DimChev>
                  <Chev color="#666" w={8} />
                </DimChev>
              </BigText>
            </BigTool>
          </Body>
          <GroupLabel>Sensitivity</GroupLabel>
        </Group>

        <CollapseBtn>
          <Chev w={11} />
        </CollapseBtn>
      </Ribbon>

      <FormulaRow>
        <NameBox>
          K14
          <Chev w={10} />
        </NameBox>
        <DotsBox>
          <Ico w={3} h={14} sw={2} color="#ddd">
            <path d="M1.5 1 V3 M1.5 6 V8 M1.5 11 V13" />
          </Ico>
        </DotsBox>
        <FxBox>
          <Ico w={16} h={16} sw={1.1} color="#666">
            <path d="M1 1 L15 15 M15 1 L1 15" />
          </Ico>
          <Ico w={20} h={16} sw={1.1} color="#666">
            <path d="M1 9 L7 15 L19 1" />
          </Ico>
          <FxText>fx</FxText>
        </FxBox>
        <FormulaInput>
          <Chev w={10} />
        </FormulaInput>
      </FormulaRow>

      <Workspace>
        <Gutter>
          <GutterTop>
            <Ico w={13} h={13} color="#666" sw={0}>
              <path d="M13 0 V13 H0 Z" fill="#666" />
            </Ico>
          </GutterTop>
          <GutterBody>
            <SideRuler />
            <RowHeads>
              {ROWS.map((r) => (
                <RowHead key={r} $sel={r === 14} $first={r === 1}>
                  {r}
                </RowHead>
              ))}
            </RowHeads>
          </GutterBody>
        </Gutter>

        <Center>
          <TopArea>
            <TopRuler />
            <ColHeads>
              <ColSpacer $w={74} />
              {LETTERS.map((l, i) => (
                <ColHead key={l} $w={COLS[i]} $last={l === "L"} $sel={l === "K"}>
                  {l}
                </ColHead>
              ))}
              <ColSpacer $w={208} />
              {RIGHT_LETTERS.map((l, i) => (
                <ColHead key={l} $w={RIGHT_W[i]}>
                  {l}
                </ColHead>
              ))}
            </ColHeads>
          </TopArea>
          <Pages>
            <PageOne>
              <Sheet $cols={colTemplate}>
                {ROWS.map((r) =>
                  COLS.map((_, c) => <Cell key={`${r}-${c}`} $line="#dfdfdf" $r={r} $c={c + 1} />)
                )}
                <Label $c={1} $r={1} $span={2} $bold>
                  Question 3.
                </Label>
                {LEFT_LABELS.map(([text, row]) => (
                  <Label key={text} $c={2} $r={row}>
                    {text}
                  </Label>
                ))}
                <Label $c={2} $r={10} $center>
                  Ho:
                </Label>
                <Label $c={2} $r={11} $center>
                  Ha:
                </Label>
                <QuestionBox>
                  It is claimed that less than 45% of Nobel Prize winners are from the United States. We want to test this claim. Out of a random
                  <br />
                  sample of 40 Nobel Prize winners, 14 were born in the United States. Use a significance level of α = 0.05. State your conclusion
                  <br />
                  using both the p-value and the critical method.
                </QuestionBox>
                <Answer $c={3} $r={10} $span={5} />
                <Answer $c={3} $r={11} $span={5} />
                <Answer $c={4} $r={13} $span={4} />
                {[15, 16, 17, 18, 19, 20].map((r) => (
                  <Answer key={r} $c={3} $r={r} />
                ))}
                <ConclusionBox />
                <Selection>
                  <Handle />
                </Selection>
              </Sheet>
            </PageOne>
            <PageTwo>
              <Sheet $cols={rightTemplate}>
                {ROWS.map((r) =>
                  RIGHT_W.map((_, c) => <Cell key={`${r}-${c}`} $line="#dadada" $r={r} $c={c + 1} />)
                )}
              </Sheet>
              <ClickHint>Click to add data</ClickHint>
            </PageTwo>
          </Pages>
        </Center>

        <VScroll>
          <Ico w={11} h={8} color="#9a9a9a" sw={0}>
            <path d="M5.5 0 L11 8 H0 Z" fill="#9a9a9a" />
          </Ico>
          <VThumb />
          <VDown>
            <Ico w={11} h={8} color="#9a9a9a" sw={0}>
              <path d="M0 0 H11 L5.5 8 Z" fill="#9a9a9a" />
            </Ico>
          </VDown>
        </VScroll>
      </Workspace>

      <SheetBar>
        <NavBtn $ml={31}>
          <Ico w={9} h={14} sw={1.2} color="#a0a0a0">
            <path d="M8 1 L2 7 L8 13" />
          </Ico>
        </NavBtn>
        <NavBtn $ml={32}>
          <Ico w={9} h={14} sw={1.2} color="#a0a0a0">
            <path d="M1 1 L7 7 L1 13" />
          </Ico>
        </NavBtn>
        <SheetTab $w={99} $ml={70}>
          Question 1
        </SheetTab>
        <TabDivider />
        <SheetTab $w={116} $pl={16}>
          Question 2
        </SheetTab>
        <TabDivider />
        <ActiveSheetTab>
          Question 3
          <ActiveLine />
        </ActiveSheetTab>
        <TabDivider $ml={3} />
        <PlusBtn>+</PlusBtn>
        <DotsSpot>
          <Ico w={4} h={18} sw={2.4} color="#e0e0e0">
            <path d="M2 1 V3.5 M2 8 V10.5 M2 15 V17.5" />
          </Ico>
        </DotsSpot>
        <HScroll>
          <Ico w={7} h={11} color="#9a9a9a" sw={0}>
            <path d="M7 0 V11 L0 5.5 Z" fill="#9a9a9a" />
          </Ico>
          <HThumb />
          <Ico w={7} h={11} color="#9a9a9a" sw={0}>
            <path d="M0 0 V11 L7 5.5 Z" fill="#9a9a9a" />
          </Ico>
        </HScroll>
      </SheetBar>

      <StatusBar>
        <StatusText $ml={17}>Ready</StatusText>
        <TabGap $w={38} />
        <Ico w={20} h={20} sw={1.1} color="#e8e8e8">
          <circle cx="9" cy="3" r="2" />
          <path d="M1 5 C5 8 13 8 17 5 M7 8 V12 L4 18 M11 8 V12" />
          <path d="M10 13 L17 19 M17 13 L10 19" />
        </Ico>
        <StatusText $ml={2}>Accessibility: Investigate</StatusText>
        <StatusText $ml={37}>Page: 1 of 1</StatusText>
        <ZoomArea>
          <Ico w={17} h={17} sw={1.4} color="#e0e0e0">
            <rect x="1" y="1" width="15" height="15" />
            <path d="M6 1 V16 M11 1 V16 M1 6 H16 M1 11 H16" />
          </Ico>
          <ViewBtn $active $ml={18}>
            <Ico w={18} h={17} sw={1.4} color="#e0e0e0">
              <rect x="1" y="1" width="16" height="15" />
              <rect x="5" y="4" width="8" height="9" />
              <path d="M5 8.5 H13" />
            </Ico>
          </ViewBtn>
          <ViewBtn>
            <Ico w={18} h={17} sw={1.4} color="#e0e0e0">
              <rect x="1" y="1" width="16" height="15" />
              <path d="M6 1 V10 M11 1 V10 M1 10 H17" />
            </Ico>
          </ViewBtn>
          <TabGap $w={7} />
          <Ico w={9} h={2} sw={1.6} color="#e0e0e0">
            <path d="M0 1 H9" />
          </Ico>
          <ZoomTrack>
            <ZoomThumb />
            <ZoomTick />
          </ZoomTrack>
          <Ico w={9} h={11} sw={1.1} color="#e0e0e0">
            <path d="M0 5.5 H9 M4.5 0 V11" />
          </Ico>
          <ZoomPct>88%</ZoomPct>
        </ZoomArea>
      </StatusBar>

      <TaskBar>
        <Weather>
          <Svg width={30} height={20} viewBox="0 0 30 20">
            <path d="M18 4 L24 2 L23 8 Z" fill="#e8862c" />
            <path d="M6 19 C0 19 -1 11 6 10 C7 3 17 2 20 8 C27 7 31 14 27 18 C26 19 24 19 23 19 Z" fill="#a9c8ef" />
          </Svg>
          <WeatherBadge>1</WeatherBadge>
          <WeatherText>
            57°F
            <Muted>Mostly cloudy</Muted>
          </WeatherText>
        </Weather>
        <Svg width={29} height={29} viewBox="0 0 29 29">
          <rect x="0" y="0" width="14" height="14" fill="#6fd8fb" />
          <rect x="15" y="0" width="14" height="14" fill="#4cc6f7" />
          <rect x="0" y="15" width="14" height="14" fill="#2eb3f3" />
          <rect x="15" y="15" width="14" height="14" fill="#129aee" />
        </Svg>
        <TaskSearch>
          <Ico w={18} h={20} sw={1.8} color="#e0e0e0">
            <circle cx="8" cy="8" r="6.5" />
            <path d="M12.5 13 L17 19" />
          </Ico>
          Search
          <Penguins>
            <PenguinArt />
          </Penguins>
        </TaskSearch>
        <TaskItem $ml={16}>
          <Svg width={30} height={28} viewBox="0 0 30 28">
            <rect x="0" y="8" width="23" height="20" rx="2" fill="#5c5c5c" />
            <rect x="8" y="0" width="22" height="20" rx="2" fill="#ededed" />
            <rect x="8" y="8" width="15" height="12" fill="#a8a8a8" />
          </Svg>
        </TaskItem>
        <TaskItem $ml={25}>
          <Svg width={29} height={30} viewBox="0 0 29 30">
            <path d="M14.5 0 C23 0 29 6 29 14 C29 22 23 27 14 27 C11 27 8 28 4 30 C5 27 5 25 4 23 C1 21 0 18 0 14 C0 6 6 0 14.5 0 Z" fill="#6b5fc2" />
            <rect x="6" y="9" width="11" height="11" rx="2" fill="#fff" />
            <path d="M18 13 L24 9 V20 L18 16 Z" fill="#fff" />
          </Svg>
        </TaskItem>
        <TaskItem $ml={26}>
          <Svg width={30} height={27} viewBox="0 0 30 27">
            <path d="M0 2 C0 1 1 0 2 0 H10 L13 3 H30 V27 H0 Z" fill="#d9a008" />
            <rect x="0" y="5" width="30" height="22" rx="1" fill="#fdd35b" />
            <rect x="5" y="19" width="20" height="8" rx="2" fill="#1479c4" />
            <rect x="9" y="22" width="12" height="1.5" fill="#9fd7f5" />
          </Svg>
        </TaskItem>
        <TaskItem $ml={25}>
          <Svg width={29} height={30} viewBox="0 0 29 30">
            <path d="M9 7 V2 H20 V7" fill="none" stroke="#2fb4ee" strokeWidth="2" />
            <rect x="0" y="5" width="29" height="25" rx="4" fill="#f2f2f2" />
            <rect x="9" y="11" width="5" height="5" fill="#f25022" />
            <rect x="15" y="11" width="5" height="5" fill="#7fba00" />
            <rect x="9" y="17" width="5" height="5" fill="#00a4ef" />
            <rect x="15" y="17" width="5" height="5" fill="#ffb900" />
          </Svg>
        </TaskItem>
        <TaskItem $ml={16} $active>
          <Svg width={29} height={28} viewBox="0 0 29 28">
            <rect x="7" y="0" width="22" height="28" rx="1" fill="#107c41" />
            <rect x="18" y="0" width="11" height="9" fill="#33c481" />
            <rect x="7" y="0" width="11" height="9" fill="#21a366" />
            <rect x="18" y="9" width="11" height="9" fill="#21a366" />
            <rect x="7" y="18" width="22" height="10" fill="#185c37" />
            <rect x="0" y="6" width="15" height="16" rx="1" fill="#0e6b39" />
            <path d="M4 10 L10.5 18 M10.5 10 L4 18" stroke="#fff" strokeWidth="1.8" />
          </Svg>
          <RunLine />
        </TaskItem>
        <TaskItem $ml={16}>
          <Svg width={29} height={28} viewBox="0 0 29 28">
            <rect x="7" y="0" width="22" height="7" fill="#41a5ee" />
            <rect x="7" y="7" width="22" height="7" fill="#2b7cd3" />
            <rect x="7" y="14" width="22" height="7" fill="#185abd" />
            <rect x="7" y="21" width="22" height="7" fill="#103f91" />
            <rect x="0" y="6" width="15" height="16" rx="1" fill="#185abd" />
            <path d="M2.5 10 L5 18 L7.5 12 L10 18 L12.5 10" stroke="#fff" strokeWidth="1.5" fill="none" />
          </Svg>
          <RunDot />
        </TaskItem>
        <Tray>
          <Ico w={14} h={8} sw={1.8} color="#e8e8e8">
            <path d="M1 7 L7 1 L13 7" />
          </Ico>
          <TabGap $w={5} />
          <Svg width={20} height={15} viewBox="0 0 20 15">
            <path d="M4 15 C0 15 0 9 4 8 C6 2 13 0 16 7 C20 7 21 15 16 15 Z" fill="#f0f0f0" />
            <path d="M3 8 L11 0 L14 6 L6 9 Z" fill="#9a9a9a" />
          </Svg>
          <TabGap $w={1} />
          <Ico w={20} h={17} sw={1.5} color="#f0f0f0">
            <path d="M1 6 C6 0 14 0 19 6 M4 9 C8 5 12 5 16 9 M7 12 C9 10 11 10 13 12" />
            <circle cx="10" cy="15" r="1.2" fill="#f0f0f0" />
          </Ico>
          <Ico w={20} h={16} sw={1.3} color="#f0f0f0">
            <path d="M1 5 H5 L10 1 V15 L5 11 H1 Z" />
            <path d="M13 5 L19 11 M19 5 L13 11" />
          </Ico>
          <Ico w={21} h={20} sw={1.4} color="#f0f0f0">
            <path d="M11 5 H18 V15 H9" />
            <path d="M20 8 V12" />
            <path d="M8 1 C3 6 3 10 5 14 C3 16 2 18 2 19 C5 17 9 14 10 9 C11 6 9 3 8 1 Z" fill="#f0f0f0" />
          </Ico>
          <Clock>
            3:12 PM
            <br />
            4/25/2023
          </Clock>
          <NotifyBadge>2</NotifyBadge>
        </Tray>
      </TaskBar>
    </Page>
  );
};

export default App;
